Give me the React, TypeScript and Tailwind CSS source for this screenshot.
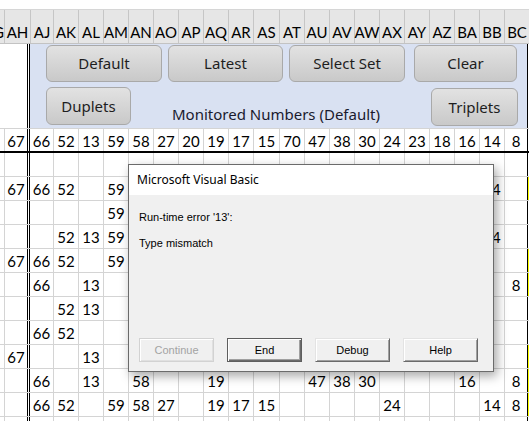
import type { ReactNode } from 'react';

const KEYS = [
  'AG', 'AH', 'AJ', 'AK', 'AL', 'AM', 'AN', 'AO', 'AP', 'AQ', 'AR',
  'AS', 'AT', 'AU', 'AV', 'AW', 'AX', 'AY', 'AZ', 'BA', 'BB', 'BC',
];

const GRID = 'border-r border-[#d4d4d4]';

// header widths (px incl. right line)
const HEAD_W: Record<string, string> = {
  AG: 'w-[25px] justify-end',
  AH: 'w-[26px] justify-center',
  AJ: 'w-[23px] justify-center',
  AS: 'w-[26px] justify-center',
};

// body cell widths
const CELL_W: Record<string, string> = {
  AG: `w-[25px] ${GRID}`,
  AH: 'w-[25px] border-r-[3px] border-double border-black',
  AJ: `w-[24px] ${GRID}`,
  AS: `w-[26px] ${GRID}`,
  BC: 'w-[23px] border-r border-black',
};

type Row = { v: Record<string, string>; mark?: boolean };

const ROWS: Row[] = [
  { v: {} },
  { v: { AH: '67', AJ: '66', AK: '52', AM: '59', BB: '14' }, mark: true },
  { v: { AM: '59' } },
  { v: { AK: '52', AL: '13', AM: '59', BB: '14' } },
  { v: { AH: '67', AJ: '66', AK: '52', AM: '59' }, mark: true },
  { v: { AJ: '66', AL: '13', BC: '8' }, mark: true },
  { v: { AK: '52', AL: '13' } },
  { v: { AJ: '66', AK: '52' } },
  { v: { AH: '67', AL: '13' }, mark: true },
  { v: { AJ: '66', AL: '13', AN: '58', AQ: '19', AU: '47', AV: '38', AW: '30', BA: '16', BC: '8' }, mark: true },
  { v: { AJ: '66', AK: '52', AM: '59', AN: '58', AO: '27', AQ: '19', AR: '17', AS: '15', AX: '24', BB: '14', BC: '8' }, mark: true },
  { v: {} },
];

const TOTALS = ['', '67', '66', '52', '13', '59', '58', '27', '20', '19', '17', '15', '70', '47', '38', '30', '24', '23', '18', '16', '14', '8'];

function SheetButton({ children, className }: { children: ReactNode; className: string }) {
  return (
    <div
      className={`flex shrink-0 items-center justify-center rounded-[6px] border border-[#a9a9a9] bg-gradient-to-b from-[#e2e2e2] to-[#c9c9c9] text-[15px] text-[#1e1e1e] ${className}`}
    >
      {children}
    </div>
  );
}

function DlgButton({ label, kind }: { label: string; kind: 'off' | 'default' | 'normal' }) {
  const look =
    kind === 'off'
      ? 'border border-[#d2d2d2] text-[#a3a3a3] shadow-[inset_1px_1px_0_#fff,inset_-1px_-1px_0_#e0e0e0]'
      : kind === 'default'
        ? 'border border-[#5e5e5e] text-black shadow-[inset_1px_1px_0_#fff,inset_-1px_-1px_0_#6a6a6a,inset_-2px_-2px_0_#a0a0a0]'
        : 'border border-t-[#e3e3e3] border-l-[#e3e3e3] border-b-[#6a6a6a] border-r-[#6a6a6a] text-black shadow-[inset_1px_1px_0_#fff,inset_-1px_-1px_0_#a0a0a0]';
  return (
    <div className={`flex h-[24px] w-[75px] items-center justify-center bg-[#f0f0f0] text-[11px] ${look}`}>
      {label}
    </div>
  );
}

export default function App() {
  return (
    <div className="relative h-[421px] w-[529px] overflow-hidden bg-white font-['Lato',sans-serif] text-[15px] text-black">
      <div className="h-[10px] border-b border-[#d6d6d6]" />

      {/* column letters */}
      <div className="-ml-[20px] flex h-[34px] border-b border-[#c3c3c3] bg-[#e6e6e6] leading-[18px]">
        {KEYS.map((k) => (
          <div
            key={k}
            className={`flex h-full shrink-0 items-end overflow-visible whitespace-nowrap border-r border-[#c6c6c6] pb-[2px] ${HEAD_W[k] ?? 'w-[25px] justify-center'}`}
          >
            {k}
          </div>
        ))}
      </div>

      {/* control panel */}
      <div className="-ml-[20px] flex h-[85px] border-b border-[#d4d4d4]">
        <div className="w-[50px] shrink-0 border-r-[3px] border-double border-black" />
        <div className="flex w-[498px] shrink-0 flex-col border-r border-black bg-[#d9e1f2] pl-[16px] pt-[1px] font-['Noto_Sans',sans-serif]">
          <div className="flex h-[37px]">
            <SheetButton className="w-[116px]">Default</SheetButton>
            <SheetButton className="ml-[6px] w-[115px]">Latest</SheetButton>
            <SheetButton className="ml-[6px] w-[116px]">Select Set</SheetButton>
            <SheetButton className="ml-[9px] w-[103px]">Clear</SheetButton>
          </div>
          <div className="mt-[5px] flex items-start">
            <SheetButton className="h-[38px] w-[85px]">Duplets</SheetButton>
            <div className="ml-[41px] mt-[16px] whitespace-nowrap text-[15px] leading-[22px] text-[#1a1a2e]">
              Monitored Numbers (Default)
            </div>
            <SheetButton className="ml-auto mr-[9px] mt-[1px] h-[38px] w-[87px]">Triplets</SheetButton>
          </div>
        </div>
      </div>

      {/* summary row */}
      <div className="-ml-[20px] flex h-[24px] border-b-2 border-black leading-[18px]">
        {KEYS.map((k, i) => (
          <div key={k} className={`flex h-full shrink-0 items-end justify-center pb-[1px] ${CELL_W[k] ?? `w-[25px] ${GRID}`}`}>
            {TOTALS[i]}
          </div>
        ))}
      </div>

      {ROWS.map((r, ri) => (
        <div key={ri} className="-ml-[20px] flex h-[24px] border-b border-[#d4d4d4] leading-[18px]">
          {KEYS.map((k) => (
            <div key={k} className={`flex h-full shrink-0 items-end justify-center pb-[2px] ${CELL_W[k] ?? `w-[25px] ${GRID}`}`}>
              {r.v[k] ?? ''}
            </div>
          ))}
          <div className={`h-full w-[4px] shrink-0 ${r.mark ? 'bg-[#ffff00]' : ''}`} />
        </div>
      ))}

      {/* VBA error box */}
      <div className="absolute left-[128px] top-[164px] flex h-[208px] w-[366px] flex-col border border-[#6b6b6b] bg-[#f0f0f0] font-['Liberation_Sans',sans-serif] shadow-[3px_4px_10px_rgba(0,0,0,0.35)]">
        <div className="flex h-[30px] items-center bg-white pl-[8px] font-['Noto_Sans',sans-serif] text-[12px]">
          Microsoft Visual Basic
        </div>
        <div className="flex flex-1 flex-col pl-[10px] pt-[16px] text-[11px]">
          <div className="leading-[13px]">Run-time error '13':</div>
          <div className="mt-[13px] leading-[13px]">Type mismatch</div>
          <div className="mt-auto mb-[9px] flex gap-[13px]">
            <DlgButton label="Continue" kind="off" />
            <DlgButton label="End" kind="default" />
            <DlgButton label="Debug" kind="normal" />
            <DlgButton label="Help" kind="normal" />
          </div>
        </div>
      </div>
    </div>
  );
}
